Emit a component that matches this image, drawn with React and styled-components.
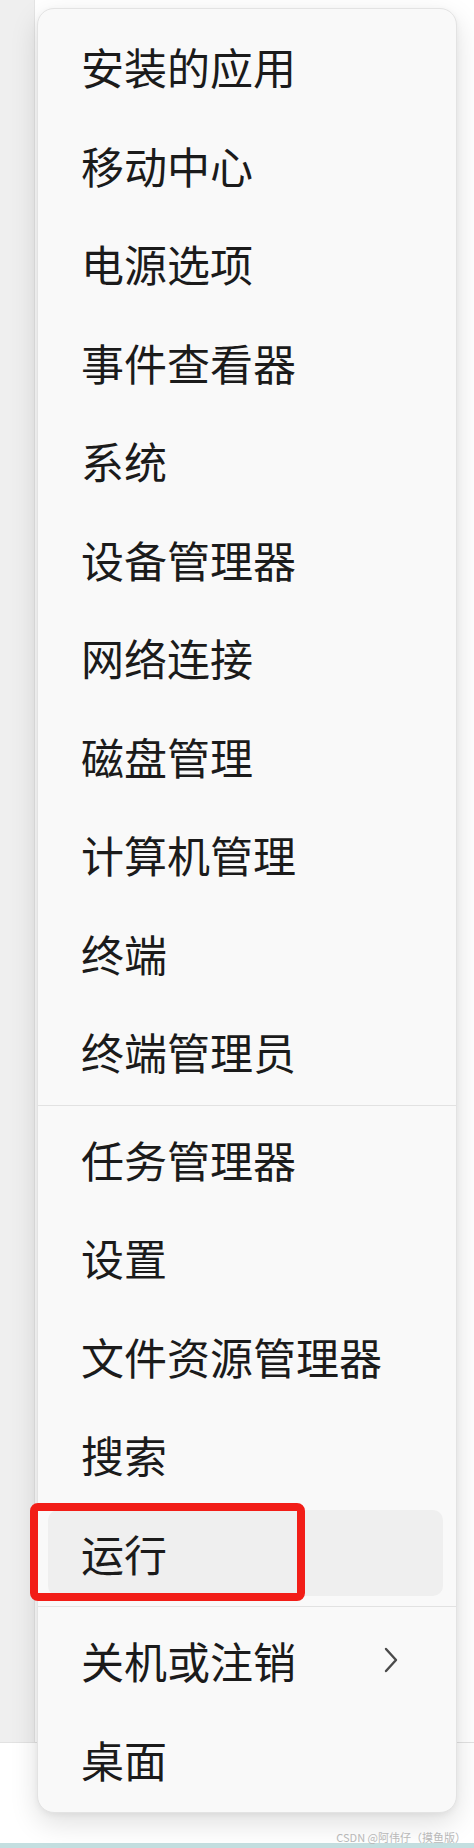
import React from 'react'
import styled, { createGlobalStyle } from 'styled-components'

const GlobalStyle = createGlobalStyle`
  html, body {
    margin: 0;
    padding: 0;
    background: #ffffff;
  }
  body {
    font-family: 'Noto Sans CJK SC', 'Noto Sans', sans-serif;
  }
`

const Page = styled.div`
  position: relative;
  width: 474px;
  height: 1848px;
  overflow: hidden;
  display: flex;
  flex-direction: column;
  background: #ffffff;
`
const Upper = styled.div`
  height: 1743px;
  display: flex;
  border-bottom: 1px solid #e2e2e2;
  box-sizing: border-box;
`
const Sidebar = styled.div`
  width: 34px;
  background: #efefef;
  border-right: 1px solid #e4e4e4;
`
const Main = styled.div`
  flex: 1;
  background: #ffffff;
`
const Lower = styled.div`
  flex: 1;
  background: #ffffff;
`
const Taskbar = styled.div`
  height: 5px;
  background: #c4dfe0;
`

const Menu = styled.div`
  position: absolute;
  top: 8px;
  left: 37px;
  width: 420px;
  box-sizing: border-box;
  padding: 8px 0 4px;
  background: #f9f9f9;
  border: 1px solid #e3e3e3;
  border-radius: 17px;
  box-shadow: 0 10px 28px rgba(0, 0, 0, 0.13), 0 2px 6px rgba(0, 0, 0, 0.05);
`
const Row = styled.div`
  position: relative;
  height: 98.5px;
  box-sizing: border-box;
  padding: 6.5px 13px 6.5px 10px;
`
const Item = styled.div`
  height: 100%;
  display: flex;
  align-items: center;
  justify-content: space-between;
  padding: 0 45px 0 33px;
  border-radius: 10px;
  background: ${(p) => (p.$active ? '#efefef' : 'transparent')};
  color: #1b1b1b;
  font-size: 43px;
  font-weight: 400;
  white-space: nowrap;
`
const Separator = styled.div`
  height: 1px;
  margin: 4px 0;
  background: #e2e2e2;
`
const Marker = styled.div`
  position: absolute;
  left: -8px;
  top: -1px;
  width: 275px;
  height: 98px;
  box-sizing: border-box;
  border: 8px solid #f21d17;
  border-radius: 8px;
  pointer-events: none;
`
const Watermark = styled.span`
  position: absolute;
  right: 8px;
  bottom: 5px;
  font-size: 11px;
  line-height: 12px;
  color: #b8b8b8;
`

const Chevron = () => (
  <svg width="14" height="26" viewBox="0 0 14 26" fill="none">
    <polyline points="2,2 12,13 2,24" stroke="#4a4a4a" strokeWidth="2.4" strokeLinecap="round" strokeLinejoin="round" />
  </svg>
)

const groups = [
  ['安装的应用', '移动中心', '电源选项', '事件查看器', '系统', '设备管理器', '网络连接', '磁盘管理', '计算机管理', '终端', '终端管理员'],
  ['任务管理器', '设置', '文件资源管理器', '搜索', '运行'],
  ['关机或注销', '桌面'],
]

const App = () => {
  return (
    <>
      <GlobalStyle />
      <Page>
        <Upper>
          <Sidebar />
          <Main />
        </Upper>
        <Lower />
        <Taskbar />
        <Menu>
          {groups.map((g, gi) => (
            <React.Fragment key={gi}>
              {gi > 0 && <Separator />}
              {g.map((label) => (
                <Row key={label}>
                  <Item $active={label === '运行'}>
                    <span>{label}</span>
                    {label === '关机或注销' && <Chevron />}
                  </Item>
                  {label === '运行' && <Marker />}
                </Row>
              ))}
            </React.Fragment>
          ))}
        </Menu>
        <Watermark>CSDN @阿伟仔（摸鱼版）</Watermark>
      </Page>
    </>
  )
}

export default App
